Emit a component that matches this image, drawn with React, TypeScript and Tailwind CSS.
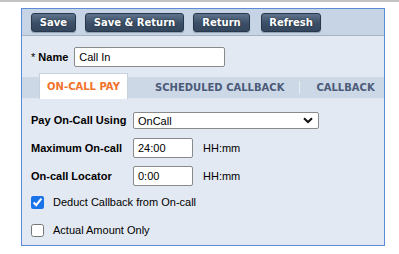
import React from "react";

const btn =
  "h-[19px] rounded-[3px] border border-[#27384c] bg-[linear-gradient(to_bottom,#64799226,#64799226),linear-gradient(to_bottom,#5d728b,#34475e_55%,#2b3d53)] text-[10px] font-bold text-white [text-shadow:0_0_2px_#1c2938] font-['DejaVu_Sans',Verdana,sans-serif] shadow-[0_1px_1px_rgba(0,0,0,0.25)]";

function Chevron() {
  return (
    <svg width="10" height="7" viewBox="0 0 10 7" className="absolute right-[6px] top-[5px]">
      <path d="M1 1.2 L5 5 L9 1.2" fill="none" stroke="#111" strokeWidth="2" />
    </svg>
  );
}

export default function App() {
  return (
    <div className="min-h-screen bg-white font-['Liberation_Sans',Arial,sans-serif] text-[11px] text-black">
      <div className="h-[2px] bg-[#c3c3c3]" />
      <div className="ml-[21px] mt-[6px] w-[364px] border border-[#5b8ad6] bg-[#e3e9f2]">
        {/* toolbar */}
        <div className="flex h-[27px] items-center gap-[9px] border-b border-[#a9b3bf] bg-[#c6d4e5] pl-[9px]">
          <button className={`${btn} w-[45px]`}>Save</button>
          <button className={`${btn} w-[99px]`}>Save &amp; Return</button>
          <button className={`${btn} w-[57px]`}>Return</button>
          <button className={`${btn} ml-[2px] w-[60px]`}>Refresh</button>
        </div>

        {/* name */}
        <div className="flex items-center pl-[9px] pt-[11px]">
          <span className="font-bold">
            <span className="font-normal">* </span>Name
          </span>
          <input
            defaultValue="Call In"
            className="ml-[6px] h-[20px] w-[151px] rounded-[2px] border border-[#8a8a8a] bg-white px-[4px] text-[11px] outline-none"
          />
        </div>

        {/* tabs */}
        <div className="mt-[6px] pt-[4px]">
          <div className="flex h-[22px] items-center border-b border-[#dfe6ef] bg-[#cdd8e7] font-['DejaVu_Sans',Verdana,sans-serif] text-[10px] font-bold text-[#4a5a78]">
            <div className="-mt-[4px] ml-[17px] flex h-[26px] w-[89px] items-center justify-center self-start border border-b-0 border-[#c8d2de] bg-white text-[#f2722b]">
              ON-CALL PAY
            </div>
            <span className="ml-[27px]">SCHEDULED CALLBACK</span>
            <span className="ml-[15px] h-[13px] w-px bg-[#e8edf4]" />
            <span className="ml-[16px]">CALLBACK</span>
          </div>
        </div>

        {/* content */}
        <div className="flex flex-col pb-[5px] pl-[9px] pt-[13px]">
          <div className="flex h-[17px] items-center">
            <span className="w-[102px] font-bold">Pay On-Call Using</span>
            <div className="relative">
              <select className="h-[17px] w-[186px] appearance-none rounded-[2px] border border-[#8a8a8a] bg-white pl-[4px] text-[11px] outline-none">
                <option>OnCall</option>
              </select>
              <Chevron />
            </div>
          </div>

          <div className="mt-[9px] flex h-[20px] items-center">
            <span className="w-[102px] font-bold">Maximum On-call</span>
            <input
              defaultValue="24:00"
              className="h-[20px] w-[60px] rounded-[2px] border border-[#8a8a8a] bg-white px-[4px] text-[11px] outline-none"
            />
            <span className="ml-[10px]">HH:mm</span>
          </div>

          <div className="mt-[8px] flex h-[20px] items-center">
            <span className="w-[102px] font-bold">On-call Locator</span>
            <input
              defaultValue="0:00"
              className="h-[20px] w-[60px] rounded-[2px] border border-[#8a8a8a] bg-white px-[4px] text-[11px] outline-none"
            />
            <span className="ml-[10px]">HH:mm</span>
          </div>

          <label className="mt-[6px] flex h-[20px] items-center">
            <input type="checkbox" defaultChecked className="m-0 h-[13px] w-[13px] accent-[#1a73e8]" />
            <span className="ml-[9px]">Deduct Callback from On-call</span>
          </label>

          <label className="mt-[8px] flex h-[20px] items-center">
            <input type="checkbox" className="m-0 h-[13px] w-[13px]" />
            <span className="ml-[9px]">Actual Amount Only</span>
          </label>
        </div>
      </div>
    </div>
  );
}
